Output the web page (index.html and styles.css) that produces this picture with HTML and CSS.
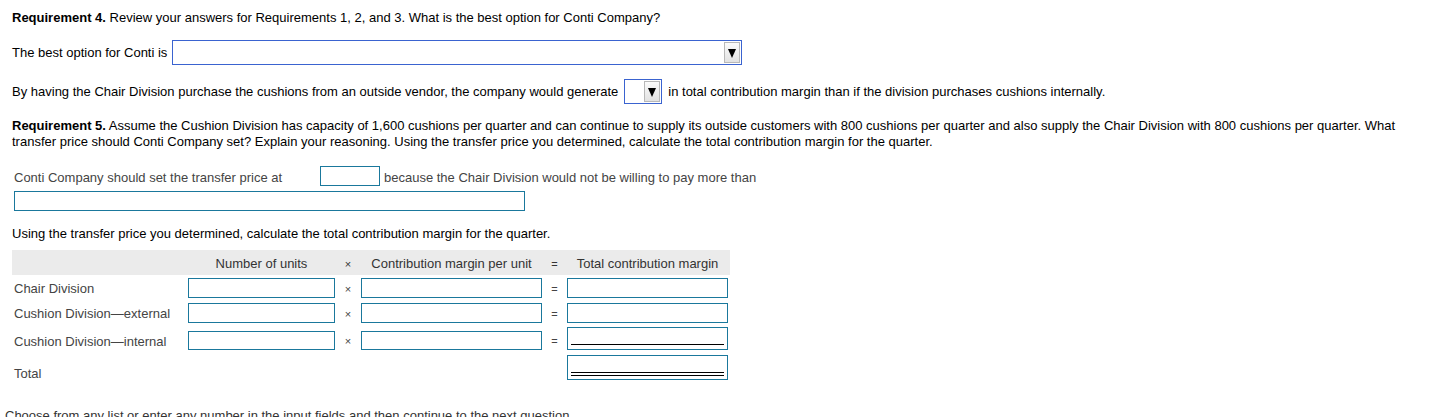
FILE: index.html
```html
<!DOCTYPE html>
<html>
<head>
<meta charset="utf-8">
<link rel="stylesheet" href="styles.css">
</head>
<body>
<div class="page">
  <p class="line l1"><b>Requirement 4.</b> Review your answers for Requirements 1, 2, and 3. What is the best option for Conti Company?</p>
  <div class="row r2">
    <span>The best option for Conti is</span>
    <span class="select big"><span class="arrow"><svg width="8" height="9" viewBox="0 0 8 9"><polygon points="0,0 8,0 4,9" fill="#000"/></svg></span></span>
  </div>
  <div class="row r3">
    <span>By having the Chair Division purchase the cushions from an outside vendor, the company would generate</span>
    <span class="select small"><span class="arrow"><svg width="8" height="9" viewBox="0 0 8 9"><polygon points="0,0 8,0 4,9" fill="#000"/></svg></span></span>
    <span>in total contribution margin than if the division purchases cushions internally.</span>
  </div>
  <p class="line l4"><b>Requirement 5.</b> Assume the Cushion Division has capacity of 1,600 cushions per quarter and can continue to supply its outside customers with 800 cushions per quarter and also supply the Chair Division with 800 cushions per quarter. What transfer price should Conti Company set? Explain your reasoning. Using the transfer price you determined, calculate the total contribution margin for the quarter.</p>
  <div class="row r5 grey">
    <span class="lab5">Conti Company should set the transfer price at</span>
    <span class="inp w60"></span>
    <span class="after">because the Chair Division would not be willing to pay more than</span>
  </div>
  <div class="r6"><span class="inp w511"></span></div>
  <p class="line l7">Using the transfer price you determined, calculate the total contribution margin for the quarter.</p>
  <div class="tbl grey">
    <div class="tr th">
      <span></span>
      <span class="c">Number of units</span>
      <span class="c op">×</span>
      <span class="c">Contribution margin per unit</span>
      <span class="c op">=</span>
      <span class="c">Total contribution margin</span>
    </div>
    <div class="tr t1">
      <span class="lab">Chair Division</span>
      <span class="inp"></span>
      <span class="c op">×</span>
      <span class="inp"></span>
      <span class="c op">=</span>
      <span class="inp"></span>
    </div>
    <div class="tr t2">
      <span class="lab">Cushion Division—external</span>
      <span class="inp"></span>
      <span class="c op">×</span>
      <span class="inp"></span>
      <span class="c op">=</span>
      <span class="inp"></span>
    </div>
    <div class="tr t3">
      <span class="lab">Cushion Division—internal</span>
      <span class="inp"></span>
      <span class="c op">×</span>
      <span class="inp"></span>
      <span class="c op">=</span>
      <span class="inp tall single"></span>
    </div>
    <div class="tr t4">
      <span class="lab">Total</span>
      <span></span>
      <span></span>
      <span></span>
      <span></span>
      <span class="inp total double"></span>
    </div>
  </div>
  <p class="foot">Choose from any list or enter any number in the input fields and then continue to the next question.</p>
</div>
</body>
</html>
```
FILE: styles.css
```css
html, body { margin: 0; padding: 0; background: #fff; }
body { font-family: "Liberation Sans", Arial, sans-serif; font-size: 13px; color: #000; overflow: hidden; height: 417px; }
.page { padding: 10px 12px 0 12px; width: 1412px; }
.line { margin: 0; line-height: 16px; }
.row { display: flex; align-items: center; }
.r2 { margin-top: 14px; height: 25px; }
.r2 > span:first-child { margin-right: 5px; }
.r3 { margin-top: 14px; height: 25px; }
.r3 .select { margin: 0 6px 0 6px; }
.l4 { margin-top: 14px; }
.select { box-sizing: border-box; border: 1px solid #3a63d0; height: 25px; background: #fff; display: flex; justify-content: flex-end; align-items: center; padding-right: 1px; }
.select.big { width: 570px; }
.select.small { width: 38px; }
.arrow { box-sizing: border-box; width: 16px; height: 21px; border: 1px solid #b8b8b8; background: linear-gradient(#fbfbfb, #e2e2e2); display: flex; justify-content: center; align-items: center; padding-top: 1px; }
.arrow svg { display: block; }
.grey { color: #444; }
.r5 { margin-top: 16px; height: 20px; padding-left: 2px; }
.r5 span:not(.inp) { position: relative; top: 1px; }
.lab5 { width: 306px; }
.after { margin-left: 4px; }
.inp { box-sizing: border-box; display: block; border: 1px solid #1a789c; background: #fff; height: 20px; }
.w60 { width: 60px; }
.r6 { margin-top: 5px; padding-left: 2px; height: 20px; }
.w511 { width: 511px; }
.l7 { margin-top: 15px; }
.tbl { margin-top: 8px; width: 718px; }
.tr { display: grid; grid-template-columns: 176px 147px 26px 181px 25px 161px; align-items: center; box-sizing: border-box; }
.th { background: #ebebeb; height: 25px; color: #333; padding-top: 2px; }
.c { text-align: center; }
.op { font-size: 11px; }
.lab { padding-left: 2px; }
.t1 { height: 28px; padding-top: 3px; align-items: start; }
.t1 .lab, .t1 .op { line-height: 22px; }
.t2 { height: 22px; align-items: start; }
.t2 .lab, .t2 .op { line-height: 22px; }
.t3 { height: 27px; align-items: end; padding-bottom: 2px; }
.t3 .lab, .t3 .op { line-height: 17px; }
.t3 .inp { height: 19px; }
.t3 .inp.tall { height: 23px; }
.t4 { height: 30px; }
.t4 .lab { align-self: end; line-height: 16px; }
.inp.total { height: 25px; }
.single { position: relative; }
.single::after { content: ""; position: absolute; left: 3px; right: 3px; bottom: 4px; border-top: 1px solid #000; }
.double { position: relative; }
.double::after { content: ""; position: absolute; left: 3px; right: 3px; bottom: 3px; height: 2px; border-top: 1px solid #000; border-bottom: 1px solid #000; }
.foot { margin: 26px 0 0 -7px; color: #333; line-height: 16px; }
```
